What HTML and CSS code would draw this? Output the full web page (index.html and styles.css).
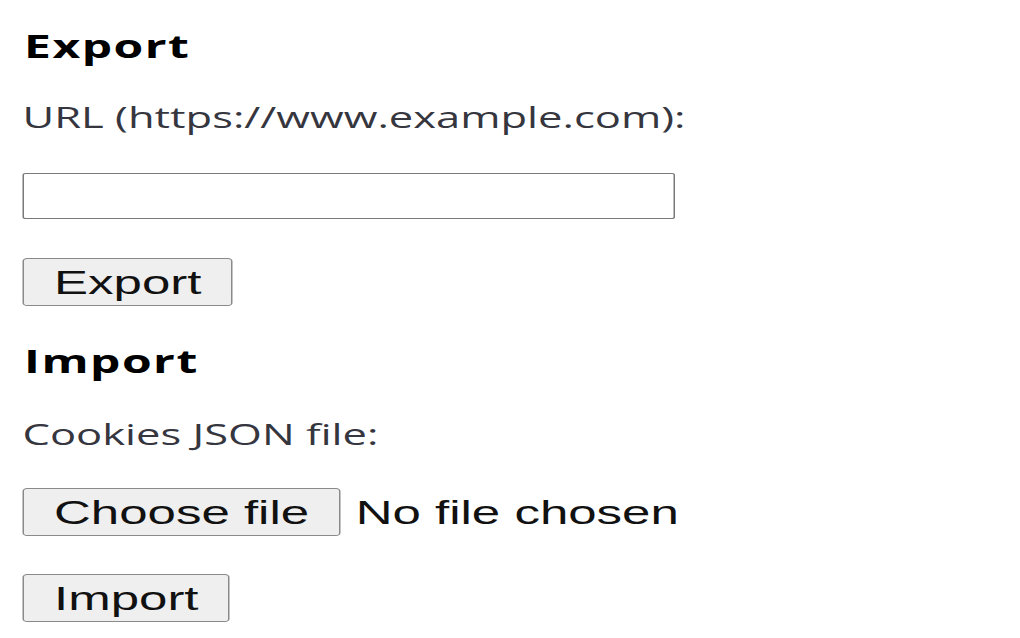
FILE: index.html
```html
<!DOCTYPE html>
<html lang="en">
<head>
<meta charset="utf-8">
<title>Cookies Export / Import</title>
<link rel="stylesheet" href="styles.css">
</head>
<body>
<main class="page">
  <h2 class="title title-export">Export</h2>
  <p class="label label-url">URL (https://www.example.com):</p>
  <input class="url-input" type="text" aria-label="URL">
  <button class="btn btn-export" type="button">Export</button>

  <h2 class="title title-import">Import</h2>
  <p class="label label-file">Cookies JSON file:</p>
  <div class="file-row">
    <button class="btn btn-choose" type="button">Choose file</button>
    <span class="file-status">No file chosen</span>
  </div>
  <button class="btn btn-import" type="button">Import</button>
</main>
</body>
</html>
```

FILE: styles.css
```css
html, body {
  margin: 0;
  padding: 0;
  background: #ffffff;
  overflow: hidden;
}

.page {
  display: flex;
  flex-direction: column;
  align-items: flex-start;
  padding: 26px 0 0 15px;
  width: 660px;
  transform: scaleX(1.5);
  transform-origin: 0 0;
}

.title {
  margin: 0;
  font-family: "Open Sans", "Noto Sans", sans-serif;
  font-weight: 700;
  font-size: 32px;
  line-height: 40px;
  letter-spacing: 1px;
  color: #000;
  padding-left: 1px;
}

.title-import {
  margin-top: 35px;
}

.label {
  margin: 31px 0 0;
  font-family: "Open Sans", "Noto Sans", sans-serif;
  font-size: 29px;
  line-height: 40px;
  letter-spacing: 0;
  color: #36363f;
  padding-left: 0;
}

.label-file {
  margin-top: 33px;
}

.url-input {
  box-sizing: border-box;
  margin: 36px 0 0;
  width: 435px;
  height: 46px;
  border: 1px solid #7a7a7a;
  border-radius: 2px;
  background: #fff;
  padding: 0 4px;
  font-family: "Liberation Sans", Arial, sans-serif;
  font-size: 30px;
}

.btn {
  box-sizing: border-box;
  height: 48px;
  margin: 0;
  padding: 0 20px;
  border: 1px solid #8a8a8a;
  border-radius: 3px;
  background: #efefef;
  font-family: "Liberation Sans", Arial, sans-serif;
  font-size: 34px;
  line-height: 46px;
  color: #111;
}

.btn-export {
  margin-top: 39px;
}

.file-row {
  display: flex;
  align-items: center;
  margin-top: 34px;
}

.file-status {
  margin-left: 10px;
  font-family: "Liberation Sans", Arial, sans-serif;
  font-size: 34px;
  line-height: 46px;
  color: #111;
}

.btn-import {
  margin-top: 38px;
}
```
